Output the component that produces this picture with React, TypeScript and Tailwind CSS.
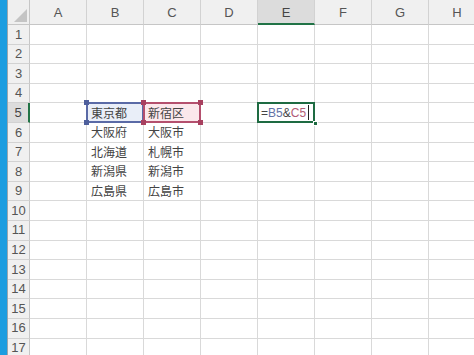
import React from "react";

const cols = ["A", "B", "C", "D", "E", "F", "G", "H"];
const rows = Array.from({ length: 17 }, (_, i) => i + 1);

const data: Record<string, string> = {
  B5: "東京都",
  C5: "新宿区",
  B6: "大阪府",
  C6: "大阪市",
  B7: "北海道",
  C7: "札幌市",
  B8: "新潟県",
  C8: "新潟市",
  B9: "広島県",
  C9: "広島市",
};

const font = { fontFamily: '"Noto Sans CJK JP", "Liberation Sans", sans-serif' };

function Corner({ color, className }: { color: string; className: string }) {
  return <span className={`absolute h-[5px] w-[5px] ${color} ${className}`} />;
}

function RefCell({ text, tone }: { text: string; tone: "blue" | "red" }) {
  const border = tone === "blue" ? "border-[#5a6aa6]" : "border-[#b4506e]";
  const fill = tone === "blue" ? "bg-[#e9eef8]" : "bg-[#fbe8ec]";
  const dot = tone === "blue" ? "bg-[#4e5f9c]" : "bg-[#a8405f]";
  return (
    <div className={`relative h-full border-r border-b border-[#d9d9d9] ${fill}`}>
      <div className={`absolute -left-px -top-px -right-px -bottom-px border-2 ${border}`} />
      <Corner color={dot} className="-left-[3px] -top-[3px]" />
      <Corner color={dot} className="-right-[3px] -top-[3px]" />
      <Corner color={dot} className="-left-[3px] -bottom-[3px]" />
      <Corner color={dot} className="-right-[3px] -bottom-[3px]" />
      <span className="relative flex h-full items-center pl-[4px] text-[12px] text-[#444]">{text}</span>
    </div>
  );
}

function ActiveCell() {
  return (
    <div className="relative h-full border-r border-b border-[#d9d9d9] bg-white">
      <div className="absolute -left-px -top-px -right-px -bottom-px border-2 border-[#1e6b42]" />
      <span className="absolute -right-[4px] -bottom-[4px] h-[5px] w-[5px] border border-white bg-[#1e6b42]" />
      <span className="relative flex h-full items-center pl-[3px] text-[12px] text-[#444]" style={{ fontFamily: '"Liberation Sans", sans-serif' }}>
        =<span className="text-[#6272a6]">B5</span>&amp;<span className="text-[#b25c76]">C5</span>
        <span className="ml-[2px] h-[15px] w-px bg-[#222]" />
      </span>
    </div>
  );
}

export default function App() {
  return (
    <div className="flex h-[355px] w-[474px] overflow-hidden bg-white" style={font}>
      <div className="w-[7px] shrink-0 bg-[#1c9de0]" />
      <div className="w-px shrink-0 bg-[#9aa6ad]" />
      <div
        className="grid shrink-0"
        style={{ gridTemplateColumns: "22px repeat(8, 57px)", gridTemplateRows: "25px repeat(17, 19.6px)" }}
      >
        <div className="relative border-r border-b border-[#c6c6c6] bg-[#efefef]">
          <svg className="absolute right-[2px] bottom-[2px]" width="13" height="13" viewBox="0 0 13 13">
            <polygon points="13,0 13,13 0,13" fill="#c4c4c4" />
          </svg>
        </div>
        {cols.map((c) => (
          <div
            key={c}
            className={`flex items-center justify-center border-r border-[#d2d2d2] pt-[2px] text-[13px] ${
              c === "E"
                ? "border-b-2 border-b-[#217346] bg-[#dcdcdc] text-[#444]"
                : "border-b border-b-[#c6c6c6] bg-[#f0f0f0] text-[#555]"
            }`}
            style={{ fontFamily: '"Liberation Sans", sans-serif' }}
          >
            {c}
          </div>
        ))}
        {rows.map((r) => (
          <React.Fragment key={r}>
            <div
              className={`flex items-center justify-center border-b border-[#d2d2d2] text-[13px] ${
                r === 5
                  ? "border-r-2 border-r-[#217346] bg-[#dcdcdc] text-[#444]"
                  : "border-r border-r-[#c6c6c6] bg-[#f0f0f0] text-[#555]"
              }`}
              style={{ fontFamily: '"Liberation Sans", sans-serif' }}
            >
              {r}
            </div>
            {cols.map((c) => {
              const id = `${c}${r}`;
              if (id === "B5") return <RefCell key={id} text={data[id]} tone="blue" />;
              if (id === "C5") return <RefCell key={id} text={data[id]} tone="red" />;
              if (id === "E5") return <ActiveCell key={id} />;
              return (
                <div
                  key={id}
                  className="flex items-center border-r border-b border-[#d9d9d9] pl-[4px] text-[12px] text-[#444]"
                >
                  {data[id] ?? ""}
                </div>
              );
            })}
          </React.Fragment>
        ))}
      </div>
    </div>
  );
}
